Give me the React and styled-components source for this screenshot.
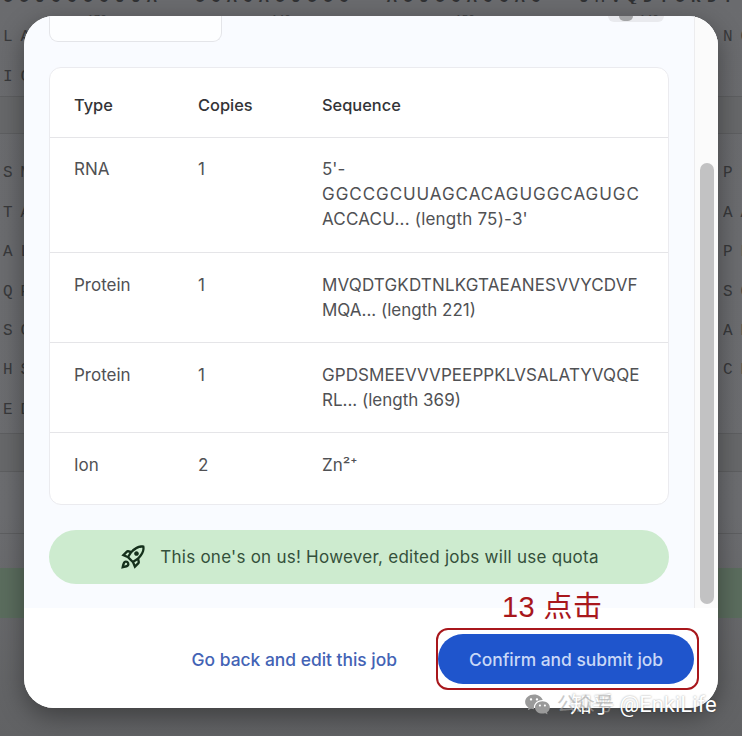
import React from "react";
import styled, { createGlobalStyle } from "styled-components";
import { MdOutlineRocketLaunch } from "react-icons/md";
import { RiWechatFill } from "react-icons/ri";

const GlobalStyle = createGlobalStyle`
  html, body {
    margin: 0;
    padding: 0;
    background: #6c6d70;
  }
  body {
    font-family: "Inter", "Noto Sans CJK SC", sans-serif;
  }
`;

const Page = styled.div`
  position: relative;
  width: 742px;
  height: 736px;
  overflow: hidden;
  background: linear-gradient(#6a6b6e, #6c6d70 70%, #616264);
`;

/* the dimmed sequence viewer behind the dialog */
const Backdrop = styled.div`
  display: flex;
  flex-direction: column;
  height: 100%;
  color: #2e2f31;
  font-family: "Liberation Mono", monospace;
  font-size: 16px;
  font-weight: 700;
`;

const SeqRow = styled.div`
  height: 39.4px;
  flex: none;
  display: flex;
  align-items: center;
  justify-content: space-between;
  letter-spacing: 8px;
  white-space: nowrap;
  overflow: hidden;
  padding-left: 3px;
  color: #38393b;
  font-weight: 400;
`;

const RightSeq = styled.span`
  flex: none;
  width: 19px;
  overflow: hidden;
`;

const TopRow = styled.div`
  height: 12px;
  margin-top: -8px;
  flex: none;
  display: flex;
  gap: 32px;
  padding-left: 3px;
  line-height: 12px;
  font-size: 16px;
  letter-spacing: 6.4px;
  white-space: nowrap;
  overflow: hidden;
  color: #303133;
`;

const TickRow = styled.div`
  height: 13.5px;
  flex: none;
  display: grid;
  grid-template-columns: repeat(4, 184px);
  padding: 9px 0 0 5px;
  box-sizing: border-box;
  font-size: 11px;
  line-height: 12px;
  font-weight: 400;
  text-align: center;
  color: #3f4042;
`;

const Band = styled.div`
  height: ${(p) => p.$h}px;
  flex: none;
  box-sizing: border-box;
  background: ${(p) => p.$bg || "transparent"};
  border-top: ${(p) => (p.$line ? "1px solid #5e5f61" : "none")};
`;

const Modal = styled.div`
  position: absolute;
  left: 24px;
  top: 16px;
  width: 694px;
  height: 692px;
  border-radius: 30px;
  overflow: hidden;
  background: #fff;
  display: flex;
  flex-direction: column;
  box-shadow: 0 8px 26px rgba(0, 0, 0, 0.38);
`;

const Body = styled.div`
  flex: 1;
  min-height: 0;
  display: flex;
  background: #f9fbff;
`;

const Content = styled.div`
  width: 670px;
  flex: none;
  padding: 0 25px;
  box-sizing: border-box;
`;

const StubRow = styled.div`
  display: flex;
  justify-content: space-between;
  align-items: flex-start;
  width: 615px;
`;

const StubCard = styled.div`
  width: 173px;
  height: 26px;
  box-sizing: border-box;
  background: #fdfeff;
  border: 1px solid #e4e5e9;
  border-top: none;
  border-radius: 0 0 9px 9px;
`;

const StubToggle = styled.div`
  width: 56px;
  height: 6px;
  background: #e9eaee;
  border-radius: 0 0 6px 6px;
  padding-left: 11px;
  box-sizing: border-box;
`;

const StubKnob = styled.div`
  width: 14px;
  height: 5px;
  background: #a3a4a6;
  border-radius: 0 0 7px 7px;
`;

const TableCard = styled.div`
  margin-top: 25px;
  width: 620px;
  background: #fff;
  border: 1px solid #ebebef;
  border-radius: 12px;
  box-sizing: border-box;
`;

const Row = styled.div`
  display: grid;
  grid-template-columns: 124px 124px 1fr;
  padding: ${(p) => p.$pad}px 24px 0;
  height: ${(p) => p.$h}px;
  box-sizing: border-box;
  font-size: 17px;
  line-height: 25px;
  color: #505154;

  &:not(:last-child) {
    border-bottom: 1px solid #e5e5e8;
  }
`;

const HeadCell = styled.div`
  font-weight: 500;
  font-size: 16.4px;
  color: #333437;
`;

const SeqLine = styled.div`
  white-space: nowrap;
  letter-spacing: ${(p) => p.$track}px;
`;

const Banner = styled.div`
  margin-top: 25px;
  width: 620px;
  height: 54px;
  border-radius: 27px;
  background: #cdebcf;
  display: flex;
  align-items: center;
  justify-content: center;
  gap: 13px;
  color: #34503b;
  font-size: 17px;
  letter-spacing: 0.25px;
  box-sizing: border-box;
`;

const RocketIcon = styled(MdOutlineRocketLaunch)`
  width: 28px;
  height: 28px;
  color: #15301c;
  flex: none;
`;

const ScrollTrack = styled.div`
  flex: 1;
  background: #fbfbfb;
  border-left: 1px solid #ececee;
  padding: 147px 4px 0 5px;
`;

const ScrollThumb = styled.div`
  height: 441px;
  background: #c2c2c3;
  border-radius: 7px;
`;

const Footer = styled.div`
  height: 100px;
  flex: none;
  background: #fff;
  display: flex;
  align-items: flex-start;
  justify-content: flex-end;
  gap: 41px;
  padding: 26px 24px 0 0;
  box-sizing: border-box;
`;

const TextButton = styled.button`
  border: none;
  background: none;
  padding: 0;
  height: 50px;
  font: inherit;
  font-size: 17.4px;
  font-weight: 500;
  color: #4363b5;
`;

const PrimaryButton = styled.button`
  border: none;
  width: 256px;
  height: 50px;
  border-radius: 25px;
  background: #1f55cc;
  color: #c9d8f7;
  font: inherit;
  font-size: 17.4px;
  font-weight: 500;
`;

const StepLabel = styled.div`
  position: absolute;
  left: 502px;
  top: 589px;
  color: #a8171c;
  font-size: 29px;
  letter-spacing: 0.4px;
  line-height: 36px;
  white-space: nowrap;
  font-family: "Liberation Sans", "Noto Sans CJK SC", sans-serif;
`;

const StepFrame = styled.div`
  position: absolute;
  left: 436px;
  top: 628px;
  width: 263px;
  height: 62px;
  box-sizing: border-box;
  border: 2px solid #a8171c;
  border-radius: 12px;
`;

const Watermark = styled.div`
  position: absolute;
  left: 524px;
  top: 691px;
  display: flex;
  align-items: center;
  font-size: 22px;
  line-height: 26px;
  color: #fff;
  white-space: nowrap;
  font-family: "Roboto", "Noto Sans CJK SC", sans-serif;
`;

const WechatIcon = styled(RiWechatFill)`
  width: 27px;
  height: 27px;
  color: #9a9a9a;
`;

const Handle = styled.span`
  position: relative;
  margin-left: 19px;
  text-shadow: 0 0 2px rgba(0, 0, 0, 0.4);
`;

const GhostName = styled.span`
  position: absolute;
  left: -13px;
  top: 0;
  font-size: 19px;
  color: #a6a6a6;
  opacity: 0.6;
  text-shadow: none;
`;

const topGroups = ["GGUCCGCUUA", "GCACAGUGGC", "AGUGCACCAC", "UMVQDTGKDT", "NLKGTA"];
const ticks = ["170", "140", "150", "140"];

const upperRows = [
  ["LA", "NC"],
  ["IC", ""],
];

const seqRows = [
  ["SM", "PL"],
  ["TA", "AA"],
  ["AL", "PF"],
  ["QP", "SC"],
  ["SC", "AN"],
  ["HS", "CD"],
  ["ED", ""],
];

const rows = [
  {
    type: "RNA",
    copies: "1",
    h: 115,
    pad: 19,
    seq: [
      ["5'-", 0],
      ["GGCCGCUUAGCACAGUGGCAGUGC", 0.95],
      ["ACCACU... (length 75)-3'", 0.2],
    ],
  },
  {
    type: "Protein",
    copies: "1",
    h: 90,
    pad: 20,
    seq: [
      ["MVQDTGKDTNLKGTAEANESVVYCDVF", 0.15],
      ["MQA... (length 221)", 0],
    ],
  },
  {
    type: "Protein",
    copies: "1",
    h: 90,
    pad: 20,
    seq: [
      ["GPDSMEEVVVPEEPPKLVSALATYVQQE", 0.07],
      ["RL... (length 369)", 0],
    ],
  },
  { type: "Ion", copies: "2", h: 71, pad: 20, seq: [["Zn²⁺", 0]] },
];

export default function App() {
  return (
    <Page>
      <GlobalStyle />
      <Backdrop>
        <TopRow>
          {topGroups.map((g) => (
            <span key={g}>{g}</span>
          ))}
        </TopRow>
        <TickRow>
          {ticks.map((t, i) => (
            <span key={i}>{t}</span>
          ))}
        </TickRow>
        {upperRows.map(([l, r], i) => (
          <SeqRow key={i}>
            <span>{l}</span>
            <RightSeq>{r}</RightSeq>
          </SeqRow>
        ))}
        <Band $h={36.5} $line $bg="#67686a" />
        <Band $h={21} $line />
        {seqRows.map(([l, r], i) => (
          <SeqRow key={i}>
            <span>{l}</span>
            <RightSeq>{r}</RightSeq>
          </SeqRow>
        ))}
        <Band $h={3} />
        <Band $h={38} $line $bg="#67686a" />
        <Band $h={62} $line />
        <Band $h={35} $line />
        <Band $h={50} $bg="#5b6d5e" />
      </Backdrop>

      <Modal>
        <Body>
          <Content>
            <StubRow>
              <StubCard />
              <StubToggle>
                <StubKnob />
              </StubToggle>
            </StubRow>
            <TableCard>
              <Row $h={70} $pad={25}>
                <HeadCell>Type</HeadCell>
                <HeadCell>Copies</HeadCell>
                <HeadCell>Sequence</HeadCell>
              </Row>
              {rows.map((row, i) => (
                <Row key={i} $h={row.h} $pad={row.pad}>
                  <div>{row.type}</div>
                  <div>{row.copies}</div>
                  <div>
                    {row.seq.map(([line, track]) => (
                      <SeqLine key={line} $track={track}>
                        {line}
                      </SeqLine>
                    ))}
                  </div>
                </Row>
              ))}
            </TableCard>
            <Banner>
              <RocketIcon />
              <span>This one's on us! However, edited jobs will use quota</span>
            </Banner>
          </Content>
          <ScrollTrack>
            <ScrollThumb />
          </ScrollTrack>
        </Body>
        <Footer>
          <TextButton>Go back and edit this job</TextButton>
          <PrimaryButton>Confirm and submit job</PrimaryButton>
        </Footer>
      </Modal>

      <StepLabel>13 点击</StepLabel>
      <StepFrame />
      <Watermark>
        <WechatIcon />
        <Handle>
          <GhostName>公众号</GhostName>
          知乎 @EnkiLife
        </Handle>
      </Watermark>
    </Page>
  );
}
